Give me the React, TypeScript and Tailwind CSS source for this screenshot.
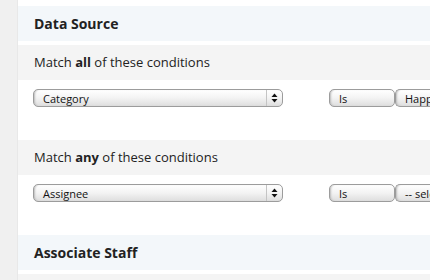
const font = { fontFamily: "'Open Sans', Lato, sans-serif" }

function Arrows() {
  return (
    <svg width="7" height="10" viewBox="0 0 7 10">
      <path d="M3.5 0.5 L6.5 4 L0.5 4 Z" fill="#111" />
      <path d="M3.5 9.5 L6.5 6 L0.5 6 Z" fill="#111" />
    </svg>
  )
}

function Select({ label, width, arrows = false, open = false }: { label: string; width: string; arrows?: boolean; open?: boolean }) {
  return (
    <div
      className={`${width} h-[18px] flex items-stretch overflow-hidden whitespace-nowrap border border-[#9c9c9c] ${open ? "rounded-l-[5px] border-r-0" : "rounded-[5px]"} bg-gradient-to-b from-white via-[#f3f3f3] to-[#dedede] shadow-[inset_2px_0_2px_-1px_#bbb] text-[11px] text-[#111] leading-none`}
    >
      <div className="flex-1 flex items-center pl-[9px]">{label}</div>
      {arrows && (
        <div className="w-[16px] border-l border-[#c4c4c4] flex items-center justify-center">
          <Arrows />
        </div>
      )}
    </div>
  )
}

function Band({ children, tone }: { children: React.ReactNode; tone: "blue" | "gray" }) {
  return (
    <div className={`h-[35px] flex items-center pl-[16px] ${tone === "blue" ? "bg-[#f3f7fa]" : "bg-[#f4f4f4]"}`}>
      {children}
    </div>
  )
}

function Row({ left, op, value }: { left: string; op: string; value: string }) {
  return (
    <div className="h-[60px] pt-[9px] pl-[15px] flex items-start">
      <Select label={left} width="w-[250px]" arrows />
      <div className="ml-[46px] flex">
        <Select label={op} width="w-[66px]" />
        <Select label={value} width="w-[60px]" open />
      </div>
    </div>
  )
}

export default function App() {
  return (
    <div className="w-[430px] h-[280px] overflow-hidden flex bg-white" style={font}>
      <div className="w-[18px] bg-[#f0f0f0] border-r border-[#e8e8e8] shrink-0" />
      <div className="flex-1 flex flex-col pt-[6px] text-[#222]">
        <Band tone="blue">
          <span className="text-[14px] font-bold">Data Source</span>
        </Band>
        <div className="h-[4px]" />
        <Band tone="gray">
          <span className="text-[13px]">
            Match <b>all</b> of these conditions
          </span>
        </Band>
        <Row left="Category" op="Is" value="Happy" />
        <Band tone="gray">
          <span className="text-[13px]">
            Match <b>any</b> of these conditions
          </span>
        </Band>
        <Row left="Assignee" op="Is" value="-- select --" />
        <Band tone="blue">
          <span className="text-[14px] font-bold">Associate Staff</span>
        </Band>
        <div className="h-[4px]" />
        <div className="flex-1 bg-[#f4f4f4]" />
      </div>
    </div>
  )
}
